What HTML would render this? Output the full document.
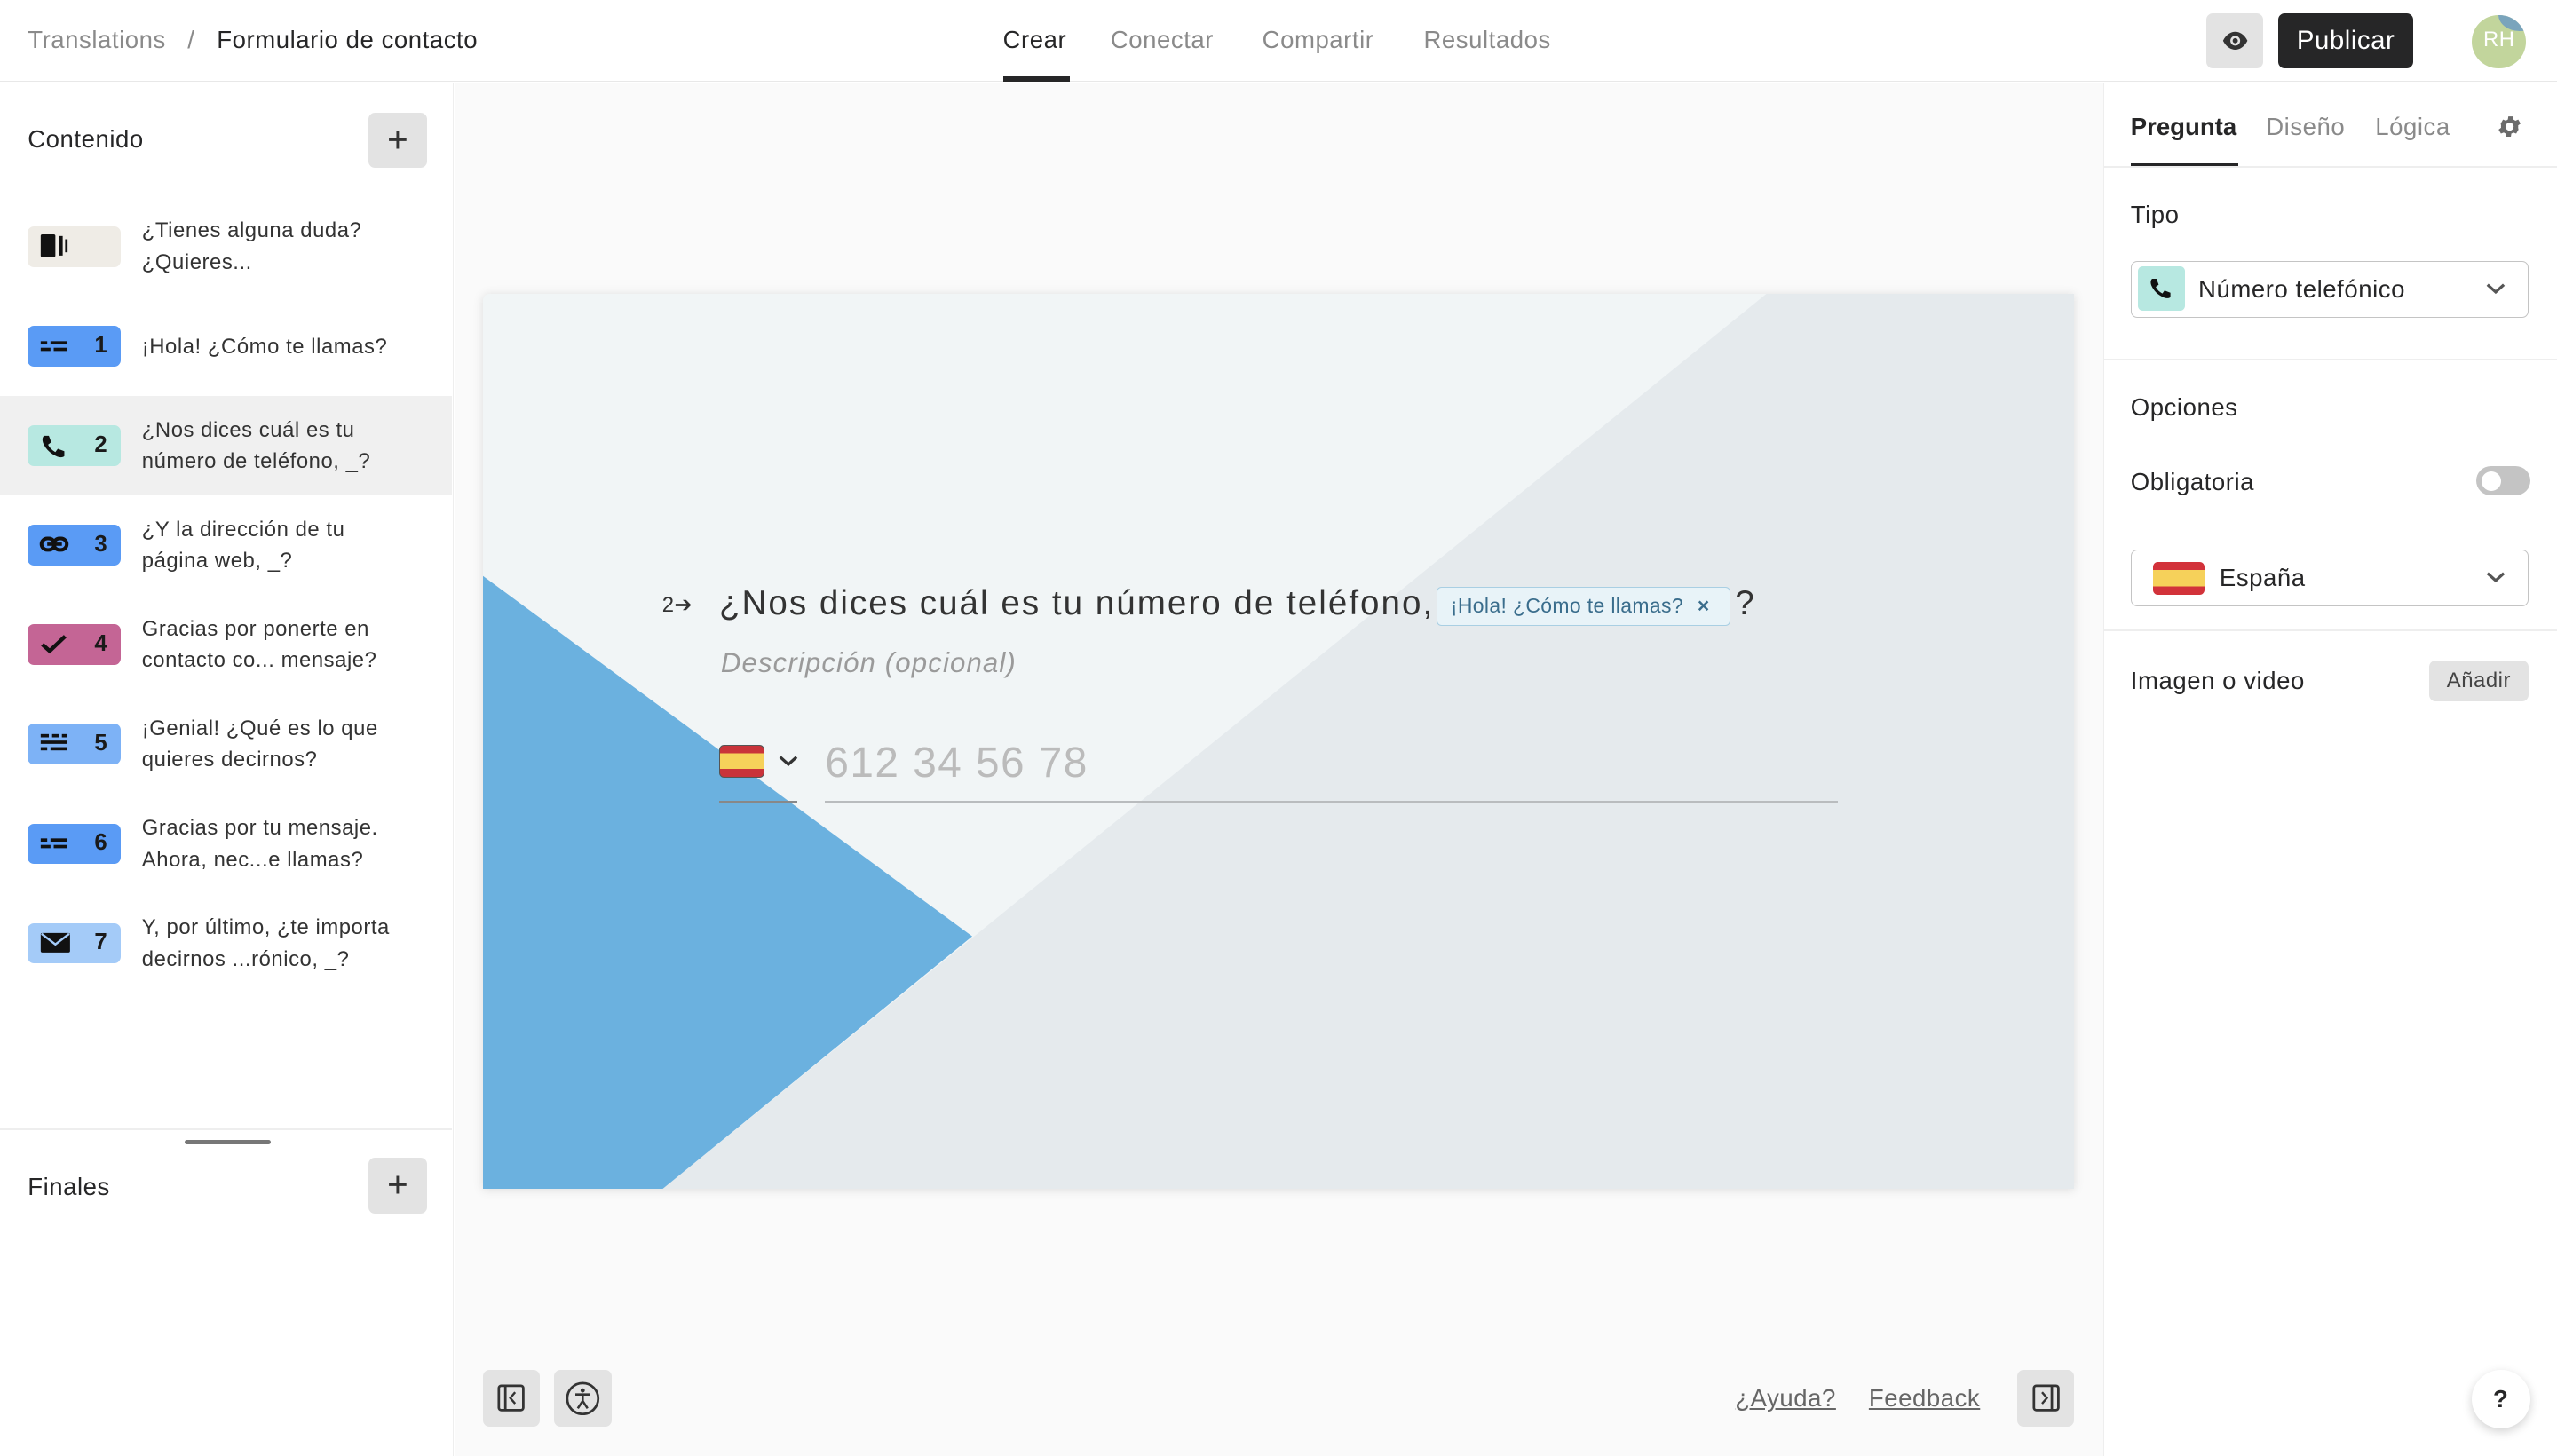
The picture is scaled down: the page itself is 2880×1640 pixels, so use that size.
<!DOCTYPE html>
<html><head><meta charset="utf-8">
<style>
*{box-sizing:border-box;margin:0;padding:0}
html,body{width:2880px;height:1640px;overflow:hidden;background:#fff}
#w{zoom:1.83673;width:1568px;height:893px;position:relative;font-family:"Liberation Sans",sans-serif;color:#262627;letter-spacing:.3px}
.a{position:absolute}
.top{left:0;top:0;width:1568px;height:50px;border-bottom:1px solid #e8e8e8;background:#fff}
.nav{font-size:15px;color:#8a8a8a;top:16px}
.left{left:0;top:51px;width:278px;height:842px;border-right:1px solid #eee;background:#fff}
.item{left:0;width:277px;height:61px}
.badge{position:absolute;left:17px;width:57px;height:25px;border-radius:4px}
.badge b{position:absolute;right:8px;top:4px;font-size:14px;color:#1a1a1a}
.badge svg{position:absolute;left:7px;top:5px}
.itxt{position:absolute;left:87px;font-size:13px;line-height:19.5px;color:#333}
.center{left:279px;top:51px;width:1011px;height:842px;background:#fafafa}
.right{left:1290px;top:51px;width:278px;height:842px;border-left:1px solid #eee;background:#fff}
.btn{background:#e3e3e3;border-radius:4px}
.sel{border:1px solid #c4c4c4;border-radius:4px;background:#fff}
</style></head><body><div id="w">
<div class="a top">
 <div class="a nav" style="left:17px">Translations</div>
 <div class="a nav" style="left:115px">/</div>
 <div class="a nav" style="left:133px;color:#262627">Formulario de contacto</div>
 <div class="a nav" style="left:615px;color:#262627">Crear</div>
 <div class="a" style="left:615px;top:47px;width:41px;height:3px;background:#262627"></div>
 <div class="a nav" style="left:681px">Conectar</div>
 <div class="a nav" style="left:774px">Compartir</div>
 <div class="a nav" style="left:873px">Resultados</div>
 <div class="a btn" style="left:1353px;top:8px;width:35px;height:34px"><svg class="a" style="left:9px;top:10px" width="17" height="14" viewBox="0 0 17 14"><path d="M1 7C3 3 6 1.5 8.5 1.5S14 3 16 7c-2 4-5 5.5-7.5 5.5S3 11 1 7z" fill="#333"/><circle cx="8.5" cy="7" r="3" fill="#e3e3e3"/><circle cx="8.5" cy="7" r="1.6" fill="#333"/></svg></div>
 <div class="a" style="left:1397px;top:8px;width:83px;height:34px;background:#262627;border-radius:4px;color:#fff;font-size:16px;text-align:center;line-height:34px">Publicar</div>
 <div class="a" style="left:1497px;top:10px;width:1px;height:30px;background:#eee"></div>
 <div class="a" style="left:1516px;top:9px;width:33px;height:33px;border-radius:50%;background:#c2d59c;overflow:hidden"><div class="a" style="left:16px;top:-10px;width:26px;height:20px;border-radius:50%;background:#7aa4bc"></div><div class="a" style="left:0;top:8px;color:#fff;font-size:13px;width:33px;text-align:center">RH</div></div>
</div>

<div class="a left">
 <div class="a" style="left:17px;top:26px;font-size:15px">Contenido</div>
 <div class="a btn" style="left:226px;top:18px;width:36px;height:34px;font-size:22px;text-align:center;line-height:33px;color:#333">+</div>
 <div class="a item" style="top:70px"><div class="badge" style="top:18px;background:#efece6"><svg width="20" height="14"><rect x="1" y="0" width="9" height="14" rx="1" fill="#111"/><rect x="12" y="1" width="2.5" height="12" fill="#111"/><rect x="16" y="3" width="1.5" height="8" fill="#111"/></svg></div><div class="itxt" style="top:11px">¿Tienes alguna duda?<br>¿Quieres...</div></div>
 <div class="a item" style="top:131px"><div class="badge" style="top:18px;background:#5a9bf5"><svg width="20" height="14"><rect x="1" y="4" width="4" height="2" fill="#111"/><rect x="7" y="4" width="10" height="2" fill="#111"/><rect x="1" y="8" width="6" height="2" fill="#111"/><rect x="9" y="8" width="8" height="2" fill="#111"/></svg><b>1</b></div><div class="itxt" style="top:21px">¡Hola! ¿Cómo te llamas?</div></div>
 <div class="a item" style="top:192px;background:#f0f0f0"><div class="badge" style="top:18px;background:#b7e8e1"><svg width="20" height="16" viewBox="0 0 20 16"><path d="M3 1l3 0 1.5 4-2 1.5c1 2 2.5 3.5 4.5 4.5l1.5-2 4 1.5 0 3c-1 1-3 1-5 0C7 12 4 9 2.5 5.5 1.8 3.5 2 2 3 1z" fill="#111"/></svg><b>2</b></div><div class="itxt" style="top:11px">¿Nos dices cuál es tu<br>número de teléfono, _?</div></div>
 <div class="a item" style="top:253px"><div class="badge" style="top:18px;background:#5a9bf5"><svg width="20" height="14"><rect x="1.5" y="3" width="8" height="7" rx="3.5" fill="none" stroke="#111" stroke-width="2.2"/><rect x="9" y="3" width="8" height="7" rx="3.5" fill="none" stroke="#111" stroke-width="2.2"/><rect x="5" y="5.5" width="9" height="2" fill="#111"/></svg><b>3</b></div><div class="itxt" style="top:11px">¿Y la dirección de tu<br>página web, _?</div></div>
 <div class="a item" style="top:314px"><div class="badge" style="top:18px;background:#c46595"><svg width="20" height="14"><path d="M2 7l4.5 4L16 2" stroke="#111" stroke-width="2.4" fill="none"/></svg><b>4</b></div><div class="itxt" style="top:11px">Gracias por ponerte en<br>contacto co... mensaje?</div></div>
 <div class="a item" style="top:375px"><div class="badge" style="top:18px;background:#7db2f6"><svg width="20" height="14"><rect x="1" y="1" width="5" height="2" fill="#111"/><rect x="8" y="1" width="4" height="2" fill="#111"/><rect x="14" y="1" width="3" height="2" fill="#111"/><rect x="1" y="5" width="16" height="2" fill="#111"/><rect x="1" y="9" width="4" height="2" fill="#111"/><rect x="7" y="9" width="10" height="2" fill="#111"/></svg><b>5</b></div><div class="itxt" style="top:11px">¡Genial! ¿Qué es lo que<br>quieres decirnos?</div></div>
 <div class="a item" style="top:436px"><div class="badge" style="top:18px;background:#5a9bf5"><svg width="20" height="14"><rect x="1" y="4" width="4" height="2" fill="#111"/><rect x="7" y="4" width="10" height="2" fill="#111"/><rect x="1" y="8" width="6" height="2" fill="#111"/><rect x="9" y="8" width="8" height="2" fill="#111"/></svg><b>6</b></div><div class="itxt" style="top:11px">Gracias por tu mensaje.<br>Ahora, nec...e llamas?</div></div>
 <div class="a item" style="top:497px"><div class="badge" style="top:18px;background:#a4cbf8"><svg width="20" height="14"><rect x="1" y="1" width="18" height="12" rx="1" fill="#111"/><path d="M1.5 1.5l8.5 6.5 8.5-6.5" stroke="#a4cbf8" stroke-width="1.3" fill="none"/></svg><b>7</b></div><div class="itxt" style="top:11px">Y, por último, ¿te importa<br>decirnos ...rónico, _?</div></div>
 <div class="a" style="left:0;top:641px;width:277px;height:1px;background:#eee"></div>
 <div class="a" style="left:113px;top:648px;width:53px;height:3px;border-radius:2px;background:#777"></div>
 <div class="a" style="left:17px;top:668px;font-size:15px">Finales</div>
 <div class="a btn" style="left:226px;top:659px;width:36px;height:34px;font-size:22px;text-align:center;line-height:33px;color:#333">+</div>
</div>

<div class="a center">
 <svg class="a" style="left:17px;top:129px;filter:drop-shadow(0 1px 3px rgba(0,0,0,.12))" width="976" height="549" viewBox="0 0 976 549">
  <rect width="976" height="549" rx="4" fill="#f1f5f6"/>
  <polygon points="787,0 976,0 976,549 110,549" fill="#e5eaed"/>
  <polygon points="0,173 300,394 110,549 0,549" fill="#6bb1df"/>
 </svg>
 <div class="a" style="left:127px;top:312px;font-size:13px;color:#333">2➔</div>
 <div class="a" style="left:162px;top:307px;font-size:21px;color:#333;letter-spacing:1.1px">¿Nos dices cuál es tu número de teléfono,</div>
 <div class="a" style="left:602px;top:309px;width:180px;height:24px;border:1px solid #a9cfe3;border-radius:3px;background:#e8f3f8;color:#3a6d8c;font-size:12.5px;line-height:22px;padding-left:8px;letter-spacing:.2px">¡Hola! ¿Cómo te llamas? <b style="margin-left:5px">×</b></div>
 <div class="a" style="left:785px;top:307px;font-size:21px;color:#333">?</div>
 <div class="a" style="left:163px;top:346px;font-size:17px;color:#9a9a9a;font-style:italic;letter-spacing:.6px">Descripción (opcional)</div>
 <div class="a" style="left:162px;top:406px;width:28px;height:20px;border-radius:3px;background:linear-gradient(#c9333a 0 25%,#f6d15a 25% 75%,#c9333a 75%);border:1px solid #555"></div>
 <svg class="a" style="left:198px;top:411px" width="13" height="9"><path d="M1.5 2l5 4.5 5-4.5" stroke="#333" stroke-width="1.8" fill="none"/></svg>
 <div class="a" style="left:162px;top:440px;width:48px;height:1px;background:#888"></div>
 <div class="a" style="left:227px;top:402px;font-size:26px;color:#bbb;letter-spacing:.8px">612 34 56 78</div>
 <div class="a" style="left:227px;top:440px;width:621px;height:1.5px;background:#b9bcbe"></div>
 <div class="a btn" style="left:17px;top:789px;width:35px;height:35px"><svg class="a" style="left:9px;top:9px" width="17" height="17"><rect x="1" y="1" width="15" height="15" rx="1.5" fill="none" stroke="#333" stroke-width="1.5"/><line x1="5" y1="1" x2="5" y2="16" stroke="#333" stroke-width="1.5"/><path d="M11 5l-3 3.5 3 3.5" stroke="#333" fill="none" stroke-width="1.3"/></svg></div>
 <div class="a btn" style="left:61px;top:789px;width:35px;height:35px"><svg class="a" style="left:7px;top:7px" width="21" height="21"><circle cx="10.5" cy="10.5" r="9.5" fill="none" stroke="#333" stroke-width="1.5"/><circle cx="10.5" cy="5.5" r="1.3" fill="#333"/><path d="M6 8h9M10.5 8v4l-3 4.5M10.5 12l3 4.5" stroke="#333" stroke-width="1.4" fill="none"/></svg></div>
 <div class="a" style="left:785px;top:798px;font-size:15px;color:#666;text-decoration:underline">¿Ayuda?</div>
 <div class="a" style="left:867px;top:798px;font-size:15px;color:#666;text-decoration:underline">Feedback</div>
 <div class="a btn" style="left:958px;top:789px;width:35px;height:35px"><svg class="a" style="left:9px;top:9px" width="17" height="17"><rect x="1" y="1" width="15" height="15" rx="1.5" fill="none" stroke="#333" stroke-width="1.5"/><line x1="12" y1="1" x2="12" y2="16" stroke="#333" stroke-width="1.5"/><path d="M6 5l3 3.5-3 3.5" stroke="#333" fill="none" stroke-width="1.3"/></svg></div>
</div>

<div class="a right">
 <div class="a" style="left:16px;top:18px;font-size:15px;font-weight:bold;color:#262627;letter-spacing:0">Pregunta</div>
 <div class="a" style="left:99px;top:18px;font-size:15px;color:#8a8a8a">Diseño</div>
 <div class="a" style="left:166px;top:18px;font-size:15px;color:#8a8a8a">Lógica</div>
 <svg class="a" style="left:240px;top:18px" width="17" height="17" viewBox="0 0 24 24"><path fill="#6b6b6b" d="M19.4 13a7.5 7.5 0 000-2l2.1-1.6-2-3.5-2.5 1a7 7 0 00-1.7-1l-.4-2.7h-4l-.4 2.7a7 7 0 00-1.7 1l-2.5-1-2 3.5L4.6 11a7.5 7.5 0 000 2l-2.1 1.6 2 3.5 2.5-1a7 7 0 001.7 1l.4 2.7h4l.4-2.7a7 7 0 001.7-1l2.5 1 2-3.5zM12 15.5a3.5 3.5 0 110-7 3.5 3.5 0 010 7z"/></svg>
 <div class="a" style="left:16px;top:49px;width:66px;height:3px;background:#262627"></div>
 <div class="a" style="left:0;top:51px;width:278px;height:1px;background:#eee"></div>
 <div class="a" style="left:16px;top:72px;font-size:15px">Tipo</div>
 <div class="a sel" style="left:16px;top:109px;width:244px;height:35px"><div class="a" style="left:4px;top:3px;width:29px;height:27px;border-radius:3px;background:#b7e8e1"><svg class="a" style="left:6px;top:5px" width="18" height="17" viewBox="0 0 20 16"><path d="M3 1l3 0 1.5 4-2 1.5c1 2 2.5 3.5 4.5 4.5l1.5-2 4 1.5 0 3c-1 1-3 1-5 0C7 12 4 9 2.5 5.5 1.8 3.5 2 2 3 1z" fill="#111"/></svg></div><div class="a" style="left:41px;top:8px;font-size:15px">Número telefónico</div><svg class="a" style="left:217px;top:12px" width="13" height="9"><path d="M1.5 2l5 4.5 5-4.5" stroke="#555" stroke-width="1.8" fill="none"/></svg></div>
 <div class="a" style="left:0;top:169px;width:278px;height:1px;background:#eee"></div>
 <div class="a" style="left:16px;top:190px;font-size:15px">Opciones</div>
 <div class="a" style="left:16px;top:236px;font-size:15px">Obligatoria</div>
 <div class="a" style="left:228px;top:235px;width:33px;height:18px;border-radius:9px;background:#c4c4c4"><div class="a" style="left:3px;top:3px;width:12px;height:12px;border-radius:50%;background:#fff"></div></div>
 <div class="a sel" style="left:16px;top:286px;width:244px;height:35px"><div class="a" style="left:13px;top:7px;width:32px;height:20px;border-radius:3px;background:linear-gradient(#d2323a 0 25%,#f6d15a 25% 75%,#d2323a 75%)"></div><div class="a" style="left:54px;top:8px;font-size:15px">España</div><svg class="a" style="left:217px;top:12px" width="13" height="9"><path d="M1.5 2l5 4.5 5-4.5" stroke="#555" stroke-width="1.8" fill="none"/></svg></div>
 <div class="a" style="left:0;top:335px;width:278px;height:1px;background:#eee"></div>
 <div class="a" style="left:16px;top:358px;font-size:15px">Imagen o video</div>
 <div class="a btn" style="left:199px;top:354px;width:61px;height:25px;font-size:13px;text-align:center;line-height:25px;color:#444">Añadir</div>
 <div class="a" style="left:225px;top:789px;width:36px;height:36px;border-radius:50%;background:#fff;box-shadow:0 2px 6px rgba(0,0,0,.18);text-align:center;line-height:36px;font-size:15px;font-weight:bold">?</div>
</div>
</div></body></html>
